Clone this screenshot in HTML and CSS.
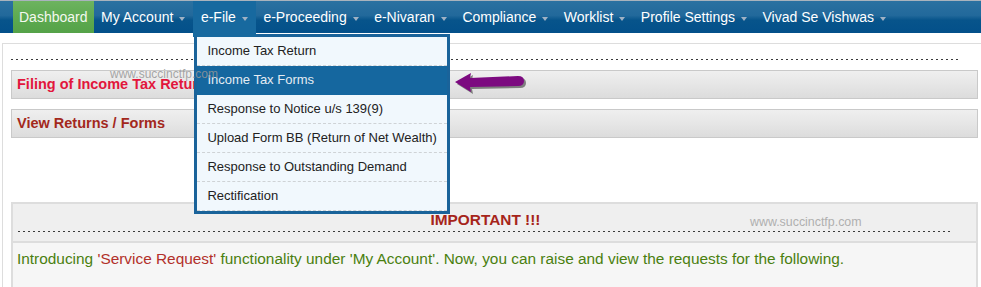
FILE: index.html
```html
<!DOCTYPE html>
<html>
<head>
<meta charset="utf-8">
<link rel="stylesheet" href="styles.css">
</head>
<body>
<div class="page">
  <nav class="navbar">
    <ul class="menu">
      <li class="item home"><a>Dashboard</a></li>
      <li class="item"><a>My Account<span class="caret"></span></a></li>
      <li class="item active"><a>e-File<span class="caret"></span></a>
        <ul class="dropdown">
          <li>Income Tax Return</li>
          <li class="hl">Income Tax Forms</li>
          <li>Response to Notice u/s 139(9)</li>
          <li>Upload Form BB (Return of Net Wealth)</li>
          <li>Response to Outstanding Demand</li>
          <li>Rectification</li>
        </ul>
      </li>
      <li class="item"><a>e-Proceeding<span class="caret"></span></a></li>
      <li class="item"><a>e-Nivaran<span class="caret"></span></a></li>
      <li class="item"><a>Compliance<span class="caret"></span></a></li>
      <li class="item"><a>Worklist<span class="caret"></span></a></li>
      <li class="item"><a>Profile Settings<span class="caret"></span></a></li>
      <li class="item"><a>Vivad Se Vishwas<span class="caret"></span></a></li>
    </ul>
  </nav>

  <div class="content">
    <div class="dots"></div>
    <div class="bar red">Filing of Income Tax Return</div>
    <div class="bar brown">View Returns / Forms</div>
    <div class="notice">
      <div class="notice-head">
        <div class="notice-title">IMPORTANT !!!</div>
        <div class="dots full"></div>
        <span class="wm wm2">www.succinctfp.com</span>
      </div>
      <div class="notice-body">Introducing <span class="sr">'Service Request'</span> functionality under 'My Account'. Now, you can raise and view the requests for the following.</div>
    </div>
  </div>

  <span class="wm wm1">www.succinctfp.com</span>
  <svg class="arrow" width="80" height="30" viewBox="0 0 80 30">
    <path class="arrow-shadow" d="M5,14 L21,5 L20,10 L68,8 Q74,8 74,13 Q74,18 68,18 L20,19 L21,24 Z"/>
    <path class="arrow-body" d="M5,14 L21,5 L20,10 L68,8 Q74,8 74,13 Q74,18 68,18 L20,19 L21,24 Z"/>
  </svg>
</div>
</body>
</html>
```

FILE: styles.css
```css
html, body {
  margin: 0;
  padding: 0;
  background: #ffffff;
}

body {
  font-family: "Liberation Sans", Arial, sans-serif;
  width: 981px;
  height: 287px;
  overflow: hidden;
}

.page {
  position: relative;
  width: 981px;
  height: 287px;
  overflow: hidden;
}

/* ---------- navbar ---------- */
.navbar {
  border-top: 1px solid #a9b3bd;
  height: 32px;
  background: linear-gradient(to bottom, #2b71a1 0%, #22699b 45%, #07548b 60%, #03508a 100%);
}

.menu {
  list-style: none;
  margin: 0;
  padding: 0 0 0 13px;
  display: flex;
  height: 32px;
}

.item {
  position: relative;
  height: 32px;
}

.item > a {
  display: flex;
  align-items: center;
  height: 32px;
  padding: 0 8px 0 7.5px;
  color: #ffffff;
  font-size: 14px;
  white-space: nowrap;
}

.item.home > a {
  padding: 0 6px;
  background: linear-gradient(to bottom, #6db35f 0%, #5eaa51 50%, #55a248 100%);
  color: #f4f8ef;
}

.item.active > a {
  position: relative;
  z-index: 3;
  height: 36px;
  padding-bottom: 4px;
  box-sizing: border-box;
  background: #17699f;
}

.caret {
  display: inline-block;
  width: 0;
  height: 0;
  margin-left: 6px;
  margin-top: 3px;
  border-left: 3.5px solid transparent;
  border-right: 3.5px solid transparent;
  border-top: 4px solid #9fb1c4;
}

/* ---------- dropdown ---------- */
.dropdown {
  position: absolute;
  z-index: 2;
  top: 33px;
  left: 1px;
  width: 250px;
  margin: 0;
  padding: 0;
  list-style: none;
  border: 3px solid #1a639a;
  background: #f1f8fd;
}

.dropdown li {
  height: 28px;
  line-height: 28px;
  padding-left: 10px;
  font-size: 13px;
  color: #222222;
  border-bottom: 1px dashed #cfd3d6;
  white-space: nowrap;
}

.dropdown li.hl {
  background: #15679f;
  color: #e4ecf3;
  border-bottom-color: #15679f;
}

/* ---------- content ---------- */
.content {
  margin: 10px 0 0 2px;
  border: 1px solid #dddddd;
  border-right: none;
  border-bottom: none;
  padding: 15px 3px 0 8px;
  height: 260px;
  box-sizing: border-box;
}

.dots {
  height: 1px;
  margin-right: 20px;
  background-image: linear-gradient(to right, #3a3a3a 40%, transparent 40%);
  background-size: 5px 1px;
  background-repeat: repeat-x;
}

.dots.full {
  margin-right: 0;
  margin-top: 1px;
}

.bar {
  margin-top: 10px;
  height: 29px;
  box-sizing: border-box;
  border: 1px solid #c9c9c9;
  background: linear-gradient(to bottom, #efefef 0%, #e6e6e6 50%, #dcdcdc 100%);
  padding-left: 5px;
  line-height: 27px;
  font-size: 14.5px;
  font-weight: bold;
}

.bar.red {
  color: #e2163c;
}

.bar.brown {
  color: #a3281c;
}

.notice {
  margin-top: 64px;
  border: 2px solid #dddddd;
}

.notice-head {
  position: relative;
  background: #efefef;
  padding: 6px 23px 9px 5px;
}

.notice-title {
  text-align: center;
  font-size: 15.4px;
  font-weight: bold;
  color: #a6241a;
  line-height: 20px;
}

.notice-body {
  border-top: 2px solid #dddddd;
  background: #f6f6f6;
  padding: 7px 4px 20px 4px;
  font-size: 15.4px;
  line-height: 18px;
  color: #4a800f;
}

.notice-body .sr {
  color: #b2302a;
}

/* ---------- overlays ---------- */
.wm {
  position: absolute;
  font-family: "Liberation Sans", Arial, sans-serif;
  font-size: 12px;
  line-height: 14px;
  color: rgba(150, 150, 150, 0.85);
  white-space: nowrap;
}

.wm1 {
  left: 110px;
  top: 67px;
  z-index: 5;
}

.wm2 {
  left: 737px;
  top: 11px;
  font-size: 12.4px;
  color: #b0b0b0;
}

.arrow {
  position: absolute;
  left: 450px;
  top: 68px;
  z-index: 6;
}

.arrow-shadow {
  fill: #2a2a2a;
  opacity: 0.55;
  transform: translate(2px, 2px);
}

.arrow-body {
  fill: #7c0a80;
}
```
